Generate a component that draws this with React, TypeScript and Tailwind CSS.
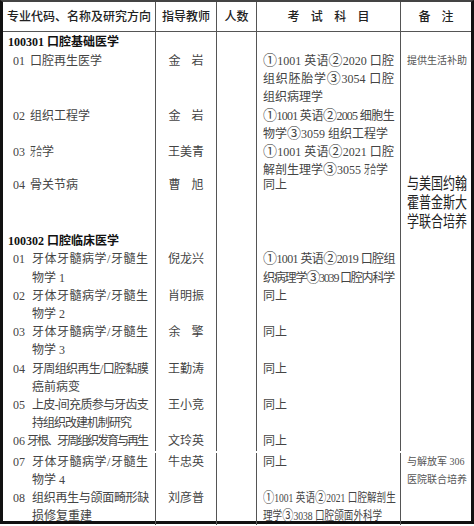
import clsx from 'clsx';
import { FC, ReactNode } from 'react';

const just = 'whitespace-nowrap [text-align-last:justify]';
const nowrap = 'whitespace-nowrap';

// 牙合 squeezed into one character cell
const Ya: FC = () => (
  <span className="inline-block w-[12px]">
    <span className="inline-block origin-left scale-x-50 whitespace-nowrap">牙合</span>
  </span>
);

// circled numbers a touch larger, without growing the line
const C: FC<{ children: ReactNode }> = ({ children }) => (
  <span className="text-[14px] leading-none">{children}</span>
);

interface RowProps {
  name?: ReactNode;
  teacher?: string;
  exam?: ReactNode;
  remark?: ReactNode;
  className?: string;
}

const Row: FC<RowProps> = ({ name, teacher, exam, remark, className }) => (
  <div className={clsx('grid grid-cols-[153px_61px_40px_144px_70px]', className)}>
    <div className="border-r border-[#555]">{name}</div>
    <div className="border-r border-[#555]">{teacher && <Teacher name={teacher} />}</div>
    <div className="border-r border-[#555]" />
    <div className="border-r border-[#555] px-[6px]">{exam}</div>
    <div className="pl-[6px]">{remark}</div>
  </div>
);

const Teacher: FC<{ name: string }> = ({ name }) =>
  name.length === 2 ? (
    <div className="mx-auto flex w-[35px] justify-between">
      <span>{name[0]}</span>
      <span>{name[1]}</span>
    </div>
  ) : (
    <div className="text-center">{name}</div>
  );

const Entry: FC<{ no: string; wide?: boolean; children: ReactNode }> = ({ no, wide, children }) => (
  <div className="flex pl-[10px]">
    <span className={wide ? 'w-[19px] shrink-0' : 'w-[17px] shrink-0'}>{no}</span>
    <div className="w-[116px]">{children}</div>
  </div>
);

const Heading: FC<{ children: ReactNode }> = ({ children }) => (
  <div className="pl-[5px] pt-[1px] font-bold text-[#111] whitespace-nowrap">{children}</div>
);

export default function App() {
  return (
    <div className="h-[526px] w-[474px] bg-white">
      <div className="w-[474px] border-x-[3px] border-t-2 border-b-[3px] border-[#111] border-t-[#444] font-['Liberation_Serif','Noto_Sans_CJK_SC',serif] text-[12px] leading-[18.2px] text-[#444]">
        {/* header */}
        <div className="grid h-[30px] grid-cols-[153px_61px_40px_144px_70px] items-stretch border-b border-[#555] font-['Noto_Sans_CJK_SC',sans-serif] font-medium text-[#222]">
          <div className="flex items-center border-r border-[#555] pl-[4px] whitespace-nowrap">专业代码、名称及研究方向</div>
          <div className="flex items-center justify-center border-r border-[#555]">指导教师</div>
          <div className="flex items-center justify-center border-r border-[#555]">人数</div>
          <div className="flex items-center border-r border-[#555]">
            <div className="mx-auto flex w-[82px] justify-between">
              <span>考</span>
              <span>试</span>
              <span>科</span>
              <span>目</span>
            </div>
          </div>
          <div className="flex items-center">
            <div className="mx-auto flex w-[35px] justify-between">
              <span>备</span>
              <span>注</span>
            </div>
          </div>
        </div>

        {/* 100301 */}
        <Row className="h-[20px]" name={<Heading>100301 口腔基础医学</Heading>} />
        <Row
          name={<Entry no="01">口腔再生医学</Entry>}
          teacher="金岩"
          exam={
            <>
              <div className={just}>
                <C>①</C>1001 英语<C>②</C>2020 口腔
              </div>
              <div className={just}>
                组织胚胎学<C>③</C>3054 口腔
              </div>
              <div className={nowrap}>组织病理学</div>
            </>
          }
          remark={<div className="whitespace-nowrap text-[10px] text-[#555]">提供生活补助</div>}
        />
        <Row
          name={<Entry no="02">组织工程学</Entry>}
          teacher="金岩"
          exam={
            <>
              <div className={clsx(just, 'tracking-[-0.8px]')}>
                <C>①</C>1001 英语<C>②</C>2005 细胞生
              </div>
              <div className={nowrap}>
                物学<C>③</C>3059 组织工程学
              </div>
            </>
          }
        />
        <Row
          name={
            <Entry no="03">
              <Ya />学
            </Entry>
          }
          teacher="王美青"
          exam={
            <>
              <div className={just}>
                <C>①</C>1001 英语<C>②</C>2021 口腔
              </div>
              <div className={nowrap}>
                解剖生理学<C>③</C>3055 <Ya />学
              </div>
            </>
          }
        />
        <Row
          className="-mt-[3px]"
          name={<Entry no="04">骨关节病</Entry>}
          teacher="曹旭"
          exam={<div>同上</div>}
          remark={
            <div className="-mt-[2px] text-[16px] leading-[19px] text-[#222]">
              <div className="origin-left scale-x-75 whitespace-nowrap">与美国约翰</div>
              <div className="origin-left scale-x-75 whitespace-nowrap">霍普金斯大</div>
              <div className="origin-left scale-x-75 whitespace-nowrap">学联合培养</div>
            </div>
          }
        />

        {/* 100302 */}
        <Row className="h-[19px]" name={<Heading>100302 口腔临床医学</Heading>} />
        <Row
          name={
            <Entry no="01" wide>
              <div className={just}>牙体牙髓病学/牙髓生</div>
              <div>物学 1</div>
            </Entry>
          }
          teacher="倪龙兴"
          exam={
            <>
              <div className={clsx(just, 'tracking-[-0.6px]')}>
                <C>①</C>1001 英语<C>②</C>2019 口腔组
              </div>
              <div className={clsx(just, 'tracking-[-1.2px]')}>
                织病理学<C>③</C>3039 口腔内科学
              </div>
            </>
          }
        />
        <Row
          name={
            <Entry no="02" wide>
              <div className={just}>牙体牙髓病学/牙髓生</div>
              <div>物学 2</div>
            </Entry>
          }
          teacher="肖明振"
          exam={<div>同上</div>}
        />
        <Row
          name={
            <Entry no="03" wide>
              <div className={just}>牙体牙髓病学/牙髓生</div>
              <div>物学 3</div>
            </Entry>
          }
          teacher="余擎"
          exam={<div>同上</div>}
        />
        <Row
          name={
            <Entry no="04" wide>
              <div className={clsx(just, 'tracking-[-0.7px]')}>牙周组织再生/口腔黏膜</div>
              <div>癌前病变</div>
            </Entry>
          }
          teacher="王勤涛"
          exam={<div>同上</div>}
        />
        <Row
          name={
            <Entry no="05" wide>
              <div className={clsx(just, 'tracking-[-0.8px]')}>上皮-间充质参与牙齿支</div>
              <div className="whitespace-nowrap tracking-[-1px]">持组织改建机制研究</div>
            </Entry>
          }
          teacher="王小竞"
          exam={<div>同上</div>}
        />
        <Row
          name={
            <div className="flex pl-[10px]">
              <span className="w-[14px] shrink-0">06</span>
              <div className="w-[121px] whitespace-nowrap tracking-[-2px]">牙根、牙周组织发育与再生</div>
            </div>
          }
          teacher="文玲英"
          exam={<div>同上</div>}
        />
        <Row
          className="pt-[2px]"
          name={
            <Entry no="07" wide>
              <div className={just}>牙体牙髓病学/牙髓生</div>
              <div>物学 4</div>
            </Entry>
          }
          teacher="牛忠英"
          exam={<div>同上</div>}
          remark={
            <div className="whitespace-nowrap text-[10px] text-[#555]">
              <div>与解放军 306</div>
              <div>医院联合培养</div>
            </div>
          }
        />
        <Row
          className="h-[32px]"
          name={
            <Entry no="08" wide>
              <div className={clsx(just, 'tracking-[-0.3px]')}>组织再生与颌面畸形缺</div>
              <div>损修复重建</div>
            </Entry>
          }
          teacher="刘彦普"
          exam={
            <>
              <div className="origin-left scale-x-[0.8] whitespace-nowrap">
                <C>①</C>1001 英语<C>②</C>2021 口腔解剖生
              </div>
              <div className="origin-left scale-x-[0.8] whitespace-nowrap">
                理学<C>③</C>3038 口腔颌面外科学
              </div>
            </>
          }
        />
      </div>
    </div>
  );
}
